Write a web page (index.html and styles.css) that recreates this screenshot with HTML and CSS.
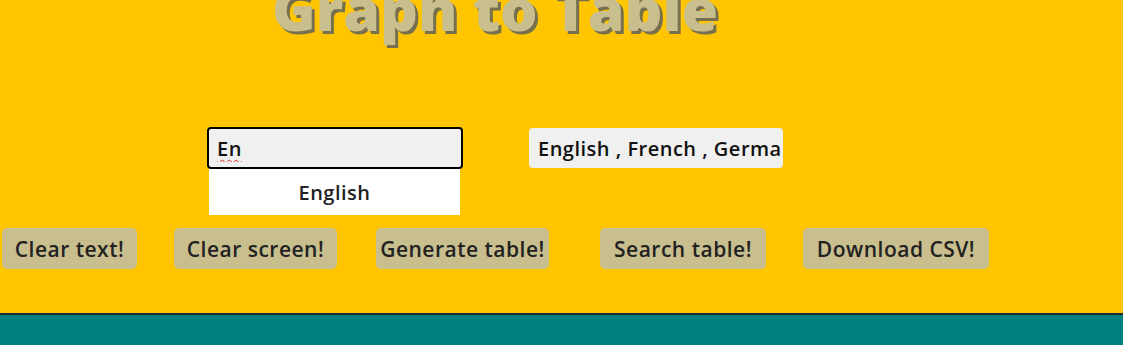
FILE: index.html
```html
<!DOCTYPE html>
<html lang="en">
<head>
    <meta charset="UTF-8">
    <meta name="viewport" content="width=device-width, initial-scale=1.0">
    <title>Graph to Table</title>
    <link rel="stylesheet" href="styles.css">
</head>
<body>
    <div id="top">
        <h1 class="title">Graph to Table</h1>

        <div class="inputs">
            <div class="search">
                <input type="text" id="langInput" class="langInput" value="En">
                <div class="suggest">English</div>
            </div>
            <div class="chosen">English , French , German</div>
        </div>

        <div class="buttons">
            <button class="btn b1">Clear text!</button>
            <button class="btn b2">Clear screen!</button>
            <button class="btn b3">Generate table!</button>
            <button class="btn b4">Search table!</button>
            <button class="btn b5">Download CSV!</button>
        </div>
    </div>
    <div id="bottom"></div>
</body>
</html>
```

FILE: styles.css
```css
body {
    font-family: "Open Sans", sans-serif;
    margin: 0;
    padding: 0;
    background-color: #008080;
    overflow: hidden;
}

#top {
    display: flow-root;
    overflow: hidden;
    background-color: #ffc500;
    border-bottom: 2px solid #1c2b33;
    height: 313px;
}

.title {
    margin: -21px 0 0 272px;
    height: 59px;
    line-height: 1;
    font-size: 59px;
    font-weight: 800;
    color: #c8be8e;
    text-shadow: 3px 3px 0 #77704f;
    white-space: nowrap;
}

.inputs {
    display: flex;
    align-items: flex-start;
    gap: 66px;
    padding-left: 207px;
    margin-top: 89px;
}

.search {
    width: 256px;
}

.langInput {
    display: block;
    width: 256px;
    height: 42px;
    box-sizing: border-box;
    padding: 0 8px;
    border: 2px solid #000;
    border-radius: 4px;
    background-color: #f0f0f0;
    font-family: "Open Sans", sans-serif;
    font-size: 20px;
    font-weight: 600;
    letter-spacing: 0.5px;
    color: #111;
    outline: none;
    text-decoration: underline wavy #e02020;
    text-decoration-thickness: 1px;
    text-underline-offset: 3px;
}

.suggest {
    width: 251px;
    height: 46px;
    margin-left: 2px;
    background-color: #fff;
    display: flex;
    align-items: center;
    justify-content: center;
    font-size: 20px;
    font-weight: 600;
    letter-spacing: 0.5px;
    color: #222;
}

.chosen {
    width: 254px;
    height: 40px;
    margin-top: 1px;
    box-sizing: border-box;
    padding: 0 9px;
    background-color: #f0f0f0;
    border-radius: 4px;
    display: flex;
    align-items: center;
    white-space: nowrap;
    overflow: hidden;
    font-size: 20px;
    font-weight: 600;
    letter-spacing: 0.5px;
    color: #111;
}

.buttons {
    display: flex;
    margin-top: 13px;
    padding-left: 2px;
}

.btn {
    height: 41px;
    padding: 0;
    border: none;
    border-radius: 5px;
    background-color: #c8be8e;
    color: #222;
    font-family: "Open Sans", sans-serif;
    font-size: 21px;
    font-weight: 600;
    letter-spacing: 0.5px;
    white-space: nowrap;
    cursor: pointer;
}
.b1 { width: 135px; }
.b2 { width: 163px; margin-left: 37px; }
.b3 { width: 173px; margin-left: 39px; }
.b4 { width: 166px; margin-left: 51px; }
.b5 { width: 186px; margin-left: 37px; }

#bottom {
    height: 40px;
}
```
